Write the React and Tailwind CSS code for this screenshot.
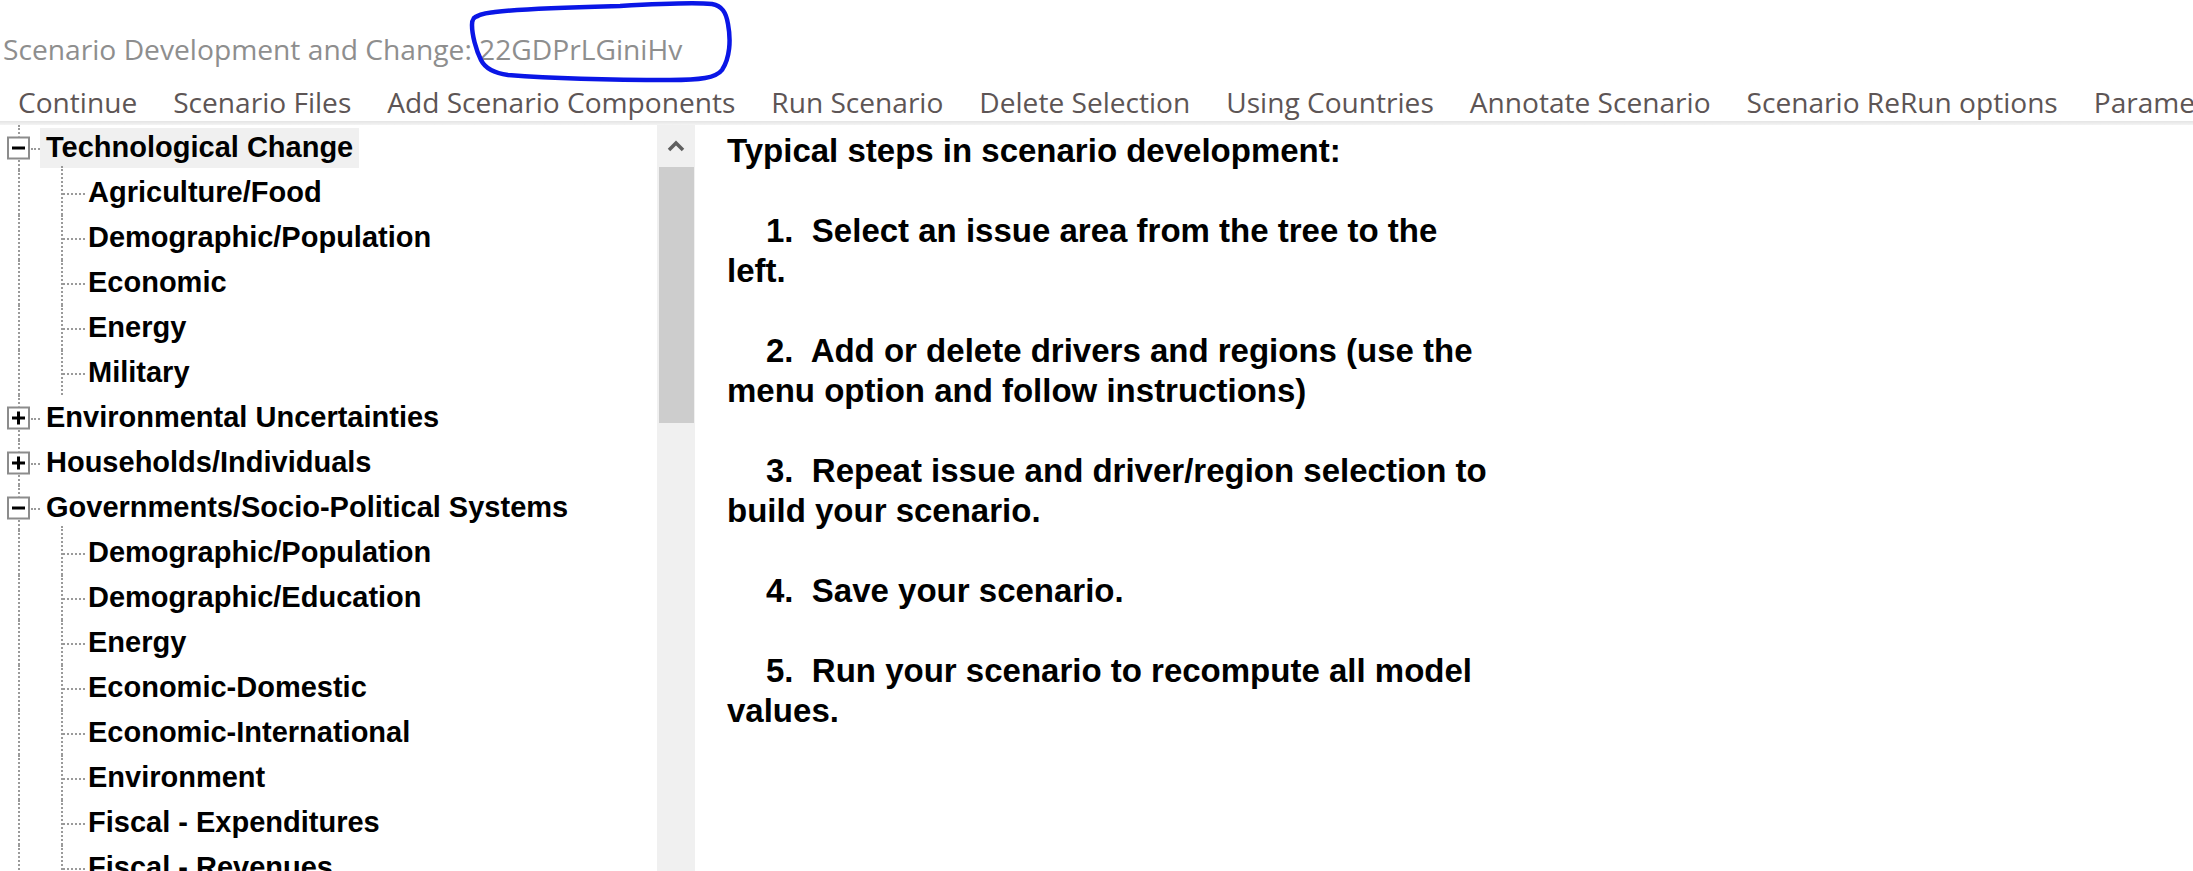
import React from "react";

const menuItems = [
  "Continue",
  "Scenario Files",
  "Add Scenario Components",
  "Run Scenario",
  "Delete Selection",
  "Using Countries",
  "Annotate Scenario",
  "Scenario ReRun options",
  "Parameters",
];

const tree = [
  {
    label: "Technological Change",
    open: true,
    selected: true,
    children: ["Agriculture/Food", "Demographic/Population", "Economic", "Energy", "Military"],
  },
  { label: "Environmental Uncertainties", open: false, children: [] },
  { label: "Households/Individuals", open: false, children: [] },
  {
    label: "Governments/Socio-Political Systems",
    open: true,
    children: [
      "Demographic/Population",
      "Demographic/Education",
      "Energy",
      "Economic-Domestic",
      "Economic-International",
      "Environment",
      "Fiscal - Expenditures",
      "Fiscal - Revenues",
    ],
  },
];

const steps = [
  ["Typical steps in scenario development:"],
  ["1.  Select an issue area from the tree to the", "left."],
  ["2.  Add or delete drivers and regions (use the", "menu option and follow instructions)"],
  ["3.  Repeat issue and driver/region selection to", "build your scenario."],
  ["4.  Save your scenario."],
  ["5.  Run your scenario to recompute all model", "values."],
];

const arial = { fontFamily: '"Liberation Sans", Arial, sans-serif' };
const uiFont = { fontFamily: '"Open Sans", "Noto Sans", sans-serif' };

const ToggleBox = ({ open }) => (
  <div className="absolute left-[7px] top-1/2 -translate-y-1/2 w-[23px] h-[23px] bg-white border-2 border-[#8c8c8c] flex items-center justify-center">
    <div className="relative w-[13px] h-[13px] flex items-center justify-center">
      <div className="absolute w-[13px] h-[3px] bg-black" />
      {!open && <div className="absolute w-[3px] h-[13px] bg-black" />}
    </div>
  </div>
);

const TopRow = ({ node }) => (
  <div className="flex items-center h-[45px]">
    {/* gutter with connectors */}
    <div className="relative w-[40px] h-full shrink-0">
      <div className="absolute left-[18px] top-0 bottom-0 border-l-2 border-dotted border-[#9a9a9a]" />
      <div className="absolute left-[31px] right-0 top-1/2 border-t-2 border-dotted border-[#9a9a9a]" />
      <ToggleBox open={node.open} />
    </div>
    <div
      className={`h-[40px] flex items-center px-[6px] text-[29px] font-bold text-black leading-none whitespace-nowrap ${
        node.selected ? "bg-[#f0f0f0]" : ""
      }`}
      style={arial}
    >
      {node.label}
    </div>
  </div>
);

const ChildRow = ({ label, first }) => (
  <div className="flex items-center h-[45px]">
    <div className="relative w-[88px] h-full shrink-0">
      <div className="absolute left-[18px] top-0 bottom-0 border-l-2 border-dotted border-[#9a9a9a]" />
      <div
        className={`absolute left-[61px] bottom-0 border-l-2 border-dotted border-[#9a9a9a] ${
          first ? "top-[-4px]" : "top-0"
        }`}
      />
      <div className="absolute left-[63px] right-[3px] top-1/2 border-t-2 border-dotted border-[#9a9a9a]" />
    </div>
    <div className="text-[29px] font-bold text-black leading-none whitespace-nowrap" style={arial}>
      {label}
    </div>
  </div>
);

export default function App() {
  return (
    <div className="w-[2193px] h-[871px] bg-white overflow-hidden relative flex flex-col">
      {/* TITLE */}
      <div
        className="pt-[30px] pl-[3px] h-[83px] text-[28.2px] leading-[38px] text-[#8e8e8e] whitespace-nowrap"
        style={uiFont}
      >
        Scenario Development and Change: 22GDPrLGiniHv
      </div>

      {/* hand drawn highlight */}
      <svg className="absolute left-[460px] top-0" width="280" height="86" viewBox="0 0 280 86" fill="none">
        <path
          d="M 14 18 C 20 13, 28 13, 35 12 C 70 8, 120 7, 160 6 C 195 4, 230 2, 252 4 C 262 6, 266 12, 268 24 C 271 40, 270 58, 262 70 C 256 78, 240 80, 210 80 C 160 80, 100 79, 48 75 C 33 73, 25 68, 21 60 C 16 50, 12 35, 12 25 C 12 20, 13 17, 18 16"
          stroke="#0a16e6"
          strokeWidth="4.5"
          strokeLinecap="round"
          strokeLinejoin="round"
        />
      </svg>

      {/* MENU */}
      <div
        className="h-[38px] flex items-center gap-[36px] pl-[18px] text-[28.1px] text-[#5d5555] whitespace-nowrap"
        style={uiFont}
      >
        {menuItems.map((m) => (
          <span key={m}>{m}</span>
        ))}
      </div>
      <div className="h-[4px] bg-gradient-to-b from-[#e4e4e4] to-[#f4f4f4]" />

      {/* PANELS */}
      <div className="flex flex-1 min-h-0">
        {/* TREE */}
        <div className="w-[657px] shrink-0 overflow-hidden">
          {tree.map((node) => (
            <div key={node.label}>
              <TopRow node={node} />
              {node.open &&
                node.children.map((c, ci) => <ChildRow key={node.label + c} label={c} first={ci === 0} />)}
            </div>
          ))}
        </div>

        {/* SCROLLBAR */}
        <div className="w-[38px] shrink-0 bg-[#f0f0f0] flex flex-col items-center">
          <div className="h-[42px] w-full flex items-center justify-center">
            <svg width="20" height="14" viewBox="0 0 20 14" fill="none">
              <path d="M3 11 L10 4 L17 11" stroke="#5f5f5f" strokeWidth="3.5" />
            </svg>
          </div>
          <div className="w-[35px] h-[256px] bg-[#cdcdcd]" />
        </div>

        {/* INSTRUCTIONS */}
        <div className="flex-1 pl-[32px] pt-[6px] text-black font-bold" style={arial}>
          {steps.map((p, i) => (
            <div key={i} className="mb-[40px]">
              {p.map((line, j) => (
                <div
                  key={j}
                  className={`text-[33px] leading-[40px] whitespace-pre ${i > 0 && j === 0 ? "pl-[39px]" : ""}`}
                >
                  {line}
                </div>
              ))}
            </div>
          ))}
        </div>
      </div>
    </div>
  );
}
